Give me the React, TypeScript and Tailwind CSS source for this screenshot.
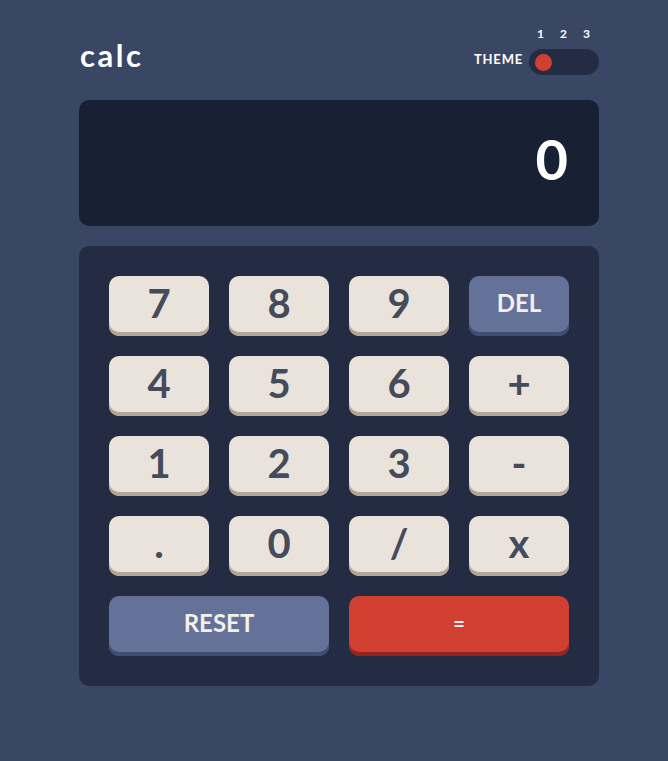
import React from "react";

const font = { fontFamily: '"Lato", "Open Sans", sans-serif' };

function Key({ label, kind = "num", wide = false }: { label: string; kind?: "num" | "blue" | "red"; wide?: boolean }) {
  const base =
    kind === "num"
      ? "bg-[#eae3dc] shadow-[inset_0_-4px_0_#b4a597] text-[#444b5a] text-[40px]"
      : kind === "blue"
      ? "bg-[#647198] shadow-[inset_0_-4px_0_#404e72] text-[#f3efeb] text-[24px]"
      : "bg-[#d03f2f] shadow-[inset_0_-4px_0_#93261a] text-[#f3efeb] text-[20px]";
  return (
    <button
      className={`${base} ${wide ? "col-span-2" : ""} h-[60px] rounded-[10px] flex items-center justify-center font-bold leading-none pb-[6px]`}
      style={font}
    >
      {label}
    </button>
  );
}

export default function App() {
  return (
    <div className="min-h-[761px] w-full bg-[#3a4764] pl-[79px]" style={font}>
      <div className="w-[520px] pt-[28px]">
        <div className="flex items-end justify-between h-[47px]">
          <div className="text-white text-[31px] font-bold leading-none pb-[4px] pl-[1px] tracking-[2.5px]">calc</div>
          <div className="flex items-end gap-[6px]">
            <div className="text-white text-[13px] font-bold tracking-[0.8px] leading-none pb-[9px]">THEME</div>
            <div className="flex flex-col w-[70px]">
              <div className="flex justify-between pl-[8px] pr-[9px] text-white text-[12px] font-bold leading-none mb-[9px]">
                <span>1</span>
                <span>2</span>
                <span>3</span>
              </div>
              <div className="h-[26px] rounded-full bg-[#232c43] flex items-center px-[6px]">
                <div className="w-[17px] h-[17px] rounded-full bg-[#d03f2f]" />
              </div>
            </div>
          </div>
        </div>
        <div className="mt-[25px] h-[126px] rounded-[10px] bg-[#182034] flex items-center justify-end pr-[31px]">
          <span className="text-white text-[56px] font-bold leading-none pb-[8px]">0</span>
        </div>
        <div className="mt-[20px] rounded-[10px] bg-[#232c43] p-[30px] grid grid-cols-4 gap-[20px]">
          <Key label="7" />
          <Key label="8" />
          <Key label="9" />
          <Key label="DEL" kind="blue" />
          <Key label="4" />
          <Key label="5" />
          <Key label="6" />
          <Key label="+" />
          <Key label="1" />
          <Key label="2" />
          <Key label="3" />
          <Key label="-" />
          <Key label="." />
          <Key label="0" />
          <Key label="/" />
          <Key label="x" />
          <Key label="RESET" kind="blue" wide />
          <Key label="=" kind="red" wide />
        </div>
      </div>
    </div>
  );
}
